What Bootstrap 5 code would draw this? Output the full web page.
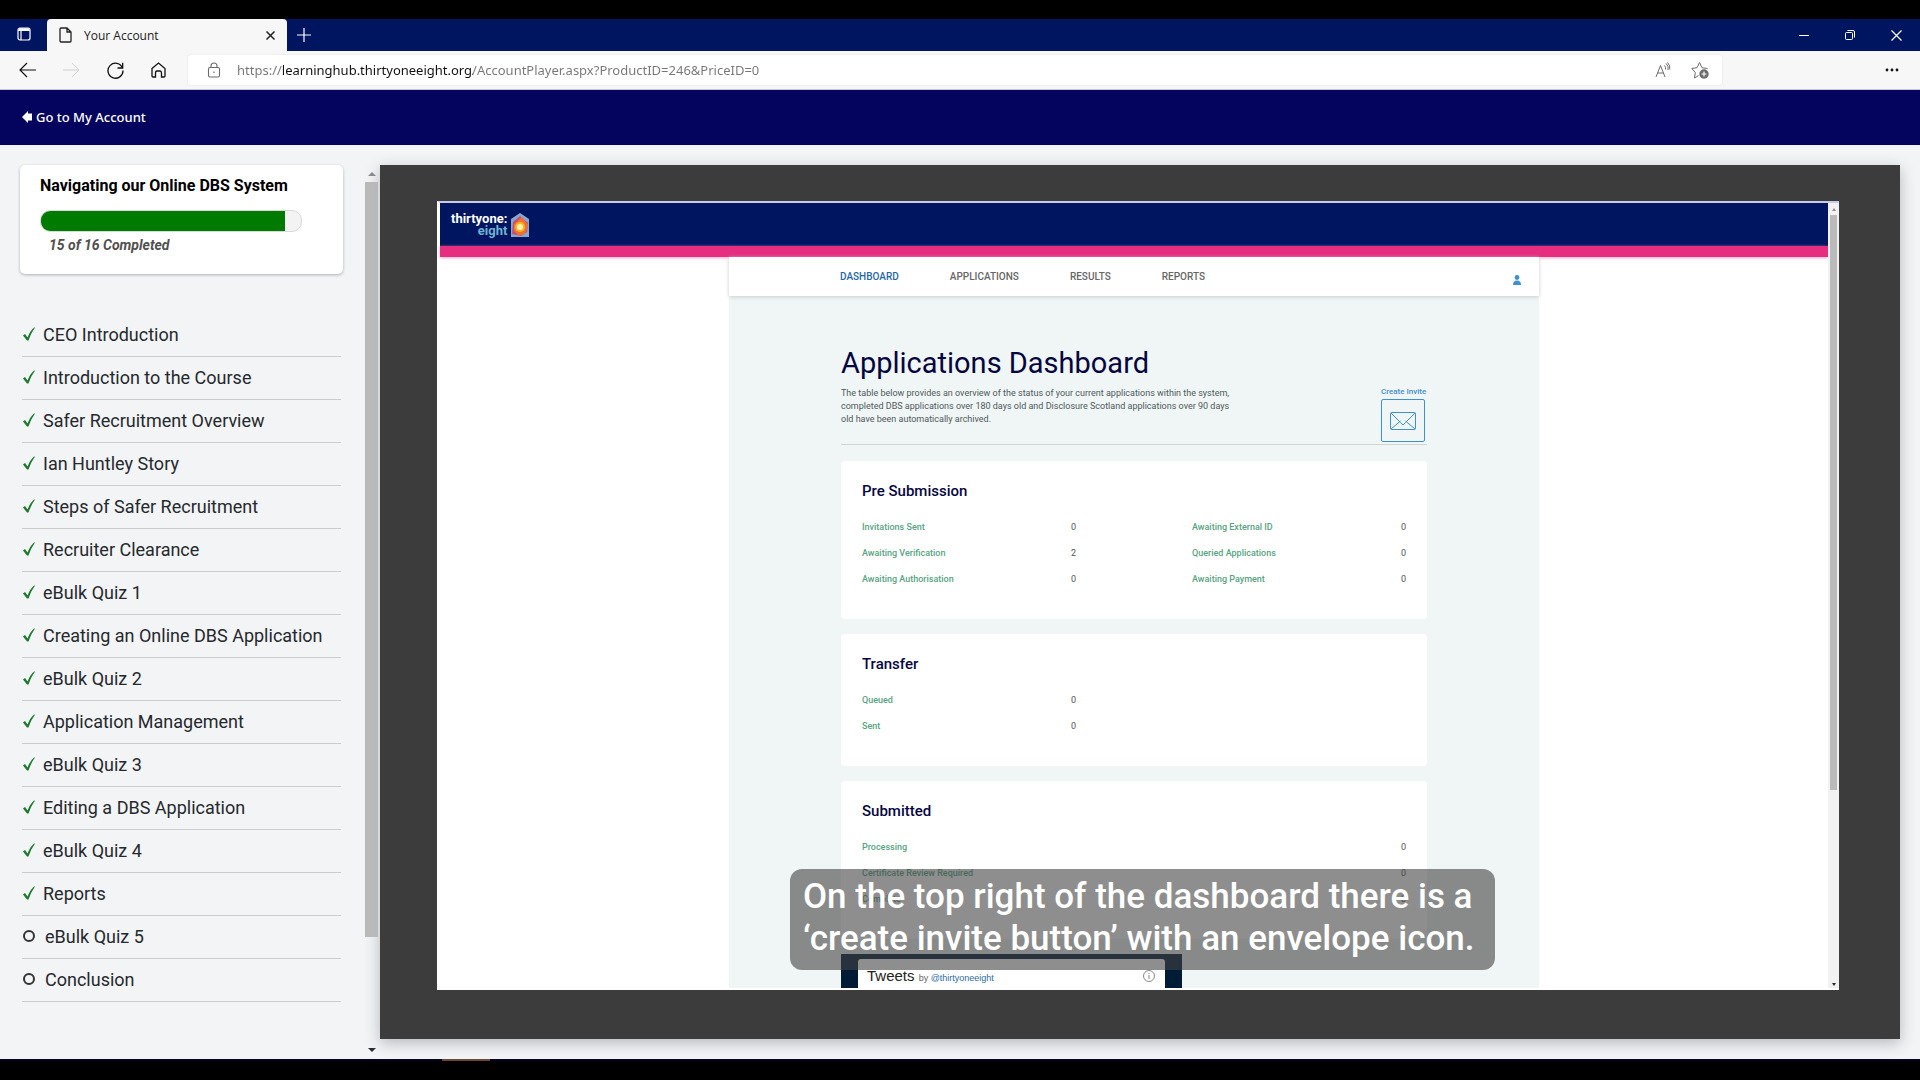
<!DOCTYPE html>
<html lang="en">
<head>
<meta charset="utf-8">
<meta name="viewport" content="width=device-width, initial-scale=1">
<title>Your Account</title>
<link href="https://cdn.jsdelivr.net/npm/bootstrap@5.3.0/dist/css/bootstrap.min.css" rel="stylesheet">
<style>
  body { font-family: Roboto, "Liberation Sans", sans-serif; background: #000; color: #26292d; }
  svg { display: block; flex: none; fill: none; stroke: currentColor; }
  .solid { fill: currentColor; stroke: none; }
  a, a:hover { color: inherit; text-decoration: none; }
  button { background: none; border: 0; padding: 0; color: inherit; }
  button:disabled { color: #d0d0d0; }
  .shell { min-height: 100vh; padding: 19px 0; }
  .ui-font { font-family: "Noto Sans", "Open Sans", sans-serif; }

  /* browser chrome */
  .tabstrip { background: #001560; color: #fff; height: 32px; }
  .tab-tools { width: 47px; padding-left: 17px; }
  .tab-current { background: #f7f7f7; color: #222; width: 240px; border-radius: 4px 4px 0 0; padding: 0 12px; font: 12px "Open Sans", sans-serif; }
  .tab-add { margin-left: 10px; }
  .win-controls { gap: 36px; padding-right: 18px; }
  .toolbar { background: #f7f7f7; height: 39px; border-bottom: 1px solid #c9cad6; color: #111; padding: 0 21px 0 19px; }
  .nav-tools { gap: 27px; width: 169px; }
  .address { background: #fff; height: 30px; border-radius: 3px; box-shadow: 0 0 2px #ddd; padding: 0 13px 0 19px; margin-right: 163px; color: #6b6b6b; }
  .address input { font-size: 13px; border: 0; outline: 0; height: 30px; padding: 0; margin-left: 16px; color: transparent;
    background: linear-gradient(90deg, #767676 46px, #111 46px, #111 236px, #767676 236px); -webkit-background-clip: text; background-clip: text; }

  /* course page */
  .topbar { background: #04045e; color: #fff; height: 55px; padding: 0 22px 2px; font: 500 13px "Noto Sans", sans-serif; }
  .course { background: #f2f4f6; padding-top: 20px; }
  .side { width: 345px; padding-left: 20px; }
  .summary { height: 109px; margin-right: 2px; padding: 10px 20px; border: 0; border-radius: 5px; box-shadow: 0 1px 3px #aab0b5; color: #000; }
  .summary h1 { font-size: 16px; line-height: 22px; font-weight: 700; margin: 0 0 13px; }
  .summary .progress { width: 262px; height: 22px; border-radius: 10px; background: #f3f3f3; border: 1px solid #d8dad8; }
  .summary .progress-bar { background: #007b00; }
  .summary p { font-size: 14px; line-height: 20px; font-weight: 700; font-style: italic; color: #505050; margin: 3px 0 0 9px; }
  .lessons { margin: 40px 4px 0 2px; }
  .lessons a { display: flex; align-items: center; height: 43px; font-size: 18px; border-bottom: 1px solid #cacccf; padding: 0 1px 2px; gap: 8px; }
  .lessons .todo { gap: 10px; }
  .lessons svg { width: 12px; height: 14px; color: #1b7a2b; }
  .lessons .todo svg { color: #333; }

  .scroll-rail { width: 15px; padding: 7px 2px 7px 0; margin-left: 20px; }
  .scroll-rail .thumb { width: 13px; height: 755px; background: #bababa; margin-top: 6px; }
  .stage { background: #3c3c3c; padding: 36px 61px 49px 57px; margin: 0 20px 20px 0; box-shadow: 0 4px 14px #b5b7ba; }
  .player { background: #fff; border: 2px solid #fff; border-left-width: 3px; border-right: 0; border-top-color: #c8cbea; }

  /* dashboard inside the player */
  .brandbar { background: #001560; height: 43px; padding: 0 11px; }
  .brand { font-size: 13px; line-height: 12px; font-weight: 700; text-align: right; color: #fff; }
  .brand span { display: block; color: #6fb3d3; }
  .pinkbar { background: #e62d80; height: 11px; box-shadow: 0 1px 3px #f5a9cb; }
  .panel { background: #f0f5f6; width: 810px; max-width: 100%; }
  .menu { background: #fff; height: 39px; padding: 0 16px 0 111px; font-size: 10px; font-weight: 500; color: #666; box-shadow: 0 1px 4px #c9cdcf; position: relative; }
  .menu .on { color: #2468a8; }
  .menu-links { gap: 51px; }
  .profile { color: #3f90cc; padding-top: 6px; }
  .inner { width: 586px; max-width: 100%; margin: 0 auto; padding-top: 49px; }
  .intro { border-bottom: 1px solid #cfd4d4; padding-bottom: 2px; margin-bottom: 16px; }
  .intro h2 { font-size: 29px; line-height: 36px; font-weight: 400; color: #06063f; margin: 0 0 6px; }
  .intro p { font-size: 9px; line-height: 13px; color: #4f5a5a; width: 394px; margin: 0 0 16px; }
  .invite { font-size: 8px; line-height: 12px; color: #3f90cc; margin-right: 2px; width: 44px; font-weight: 500; white-space: nowrap; }
  .invite-box { border: 1px solid #3f90cc; border-radius: 2px; height: 43px; margin-top: 1px; }
  .block { background: #fff; border-radius: 4px; padding: 20px 21px 26px; margin-bottom: 15px; }
  .block h3 { font-size: 15px; line-height: 20px; font-weight: 500; color: #06063f; margin: 0 0 14px; }
  .block table { width: 214px; font-size: 9px; }
  .block table.wide { width: 100%; }
  .block th { height: 26px; padding: 0; color: #58a383; font-weight: 500; }
  .block td { padding: 0; text-align: right; color: #555; }
  .tweets { background: #001b36; width: 341px; height: 34px; padding: 5px 17px 0; }
  .tweets-head { background: #fff; height: 29px; border-radius: 3px 3px 0 0; padding: 4px 10px 0 9px; font: 15px "Liberation Sans", sans-serif; color: #222; }
  .tweets-head small { font-size: 9px; color: #666; }
  .tweets-head a { color: #2b6ca3; }
  .tweets-head svg { color: #888; }
  .caption-box { position: absolute; left: 350px; bottom: 18px; width: 705px; padding: 7px 13px 10px; border-radius: 12px; background: rgba(66, 66, 66, .6); color: #fff; font-size: 35px; line-height: 42px; font-weight: 500; white-space: nowrap; }
  .rail-small { width: 11px; padding: 5px 2px 2px 2px; background: #f2f2f2; }
  .rail-small .thumb { width: 7px; height: 575px; background: #bababa; margin-top: 4px; }
  .taskbar { height: 2px; background: linear-gradient(90deg, #05051f 442px, #6b4938 442px, #6b4938 490px, #05051f 490px); }
</style>
</head>
<body>
<div class="shell d-flex flex-column">

  <header class="ui-font">
    <div class="tabstrip d-flex align-items-center">
      <div class="tab-tools"><button aria-label="Tab actions"><svg width="14" height="14" viewBox="0 0 14 14" stroke-width="1.2"><rect x="1" y="1" width="12" height="12" rx="2"/><path d="M1 3.5h12M4 4v9" /><path d="M2 2.2h10" stroke-width="2"/></svg></button></div>
      <div class="tab-current d-flex align-items-center h-100">
        <svg width="13" height="16" viewBox="0 0 13 16" stroke-width="1.3"><path d="M1 2q0-1 1-1h6l4 4v9q0 1-1 1H2q-1 0-1-1zM8 1v4h4"/></svg>
        <span class="ms-2 ps-1 flex-grow-1">Your Account</span>
        <button aria-label="Close tab"><svg width="9" height="9" viewBox="0 0 9 9" stroke-width="1.5"><path d="M.5.5l8 8M8.500.5l-8 8"/></svg></button>
      </div>
      <button class="tab-add" aria-label="New tab"><svg width="14" height="14" viewBox="0 0 14 14"><path d="M7 0v14M0 7h14" stroke-width="1.2"/></svg></button>
      <div class="win-controls d-flex align-items-center ms-auto">
        <button aria-label="Minimize"><svg width="10" height="10" viewBox="0 0 10 10"><path d="M0 5.500h10"/></svg></button>
        <button aria-label="Restore"><svg width="10" height="10" viewBox="0 0 10 10"><rect x=".5" y="2.500" width="7" height="7" rx="1"/><path d="M2.500.5H8q1.500 0 1.500 1.500v5.500"/></svg></button>
        <button aria-label="Close window"><svg width="11" height="11" viewBox="0 0 11 11" stroke-width="1.2"><path d="M.5.5l10 10M10.500.5l-10 10"/></svg></button>
      </div>
    </div>
    <div class="toolbar d-flex align-items-center">
      <div class="nav-tools d-flex align-items-center">
        <button aria-label="Back"><svg width="17" height="16" viewBox="0 0 17 16" stroke-width="1.2"><path d="M17 8H1M8 1L1 8l7 7"/></svg></button>
        <button aria-label="Forward" disabled><svg width="17" height="16" viewBox="0 0 17 16"><path d="M0 8h16M9 1l7 7-7 7"/></svg></button>
        <button aria-label="Refresh"><svg width="17" height="17" viewBox="0 0 17 17" stroke-width="1.3"><path d="M15.500 6A7.500 7.500 0 1 0 16 8.500M15.700.8V6h-5.200"/></svg></button>
        <button aria-label="Home"><svg width="15" height="16" viewBox="0 0 15 16" stroke-width="1.3"><path d="M1 6.500L7.500 1 14 6.500V14q0 1-1 1h-2.500v-4q0-2-1.500-2H6q-1.500 0-1.500 2v4H2q-1 0-1-1z"/></svg></button>
      </div>
      <div class="address d-flex align-items-center flex-grow-1">
        <svg width="14" height="16" viewBox="0 0 14 16" stroke-width="1.1"><rect x="1.500" y="5.500" width="11" height="9.500" rx="1.500"/><path d="M4 5.500V4a3 3 0 0 1 6 0v1.500"/><circle class="solid" cx="7" cy="10.200" r=".8"/></svg>
        <input class="flex-grow-1" type="text" aria-label="Address" value="https://learninghub.thirtyoneeight.org/AccountPlayer.aspx?ProductID=246&amp;PriceID=0">
        <button aria-label="Read aloud"><svg width="16" height="16" viewBox="0 0 16 16"><path d="M1 15L5.500 3.500 10 15M2.500 11h6M9.500 3.500q1.500 1.500 1 4M11 1.500q3 2.500 2 6.500M12.500.5q3 3 2.300 7"/></svg></button>
        <button class="ms-3 ps-1" aria-label="Add to favorites"><svg width="18" height="18" viewBox="0 0 18 18"><path d="M7.500 14.500L3.500 17 4.300 11.500.8 7.500l5.200-.8L8.500 1.500 11 6.700l5.500.8"/><circle class="solid" cx="13" cy="13" r="4.700"/><path d="M13 10.500v5M10.500 13h5" stroke="#fff" stroke-width="1.200"/></svg></button>
      </div>
      <button aria-label="Settings and more"><svg class="solid" width="14" height="4" viewBox="0 0 14 4"><circle cx="2" cy="2" r="1.400"/><circle cx="7" cy="2" r="1.400"/><circle cx="12" cy="2" r="1.400"/></svg></button>
    </div>
  </header>

  <nav class="topbar d-flex align-items-center">
    <a class="d-flex align-items-center gap-1" href="#"><svg class="solid" width="10" height="12" viewBox="0 0 10 12"><path d="M0 6L6 0v2.500h4v7H6V12z"/></svg>Go to My Account</a>
  </nav>

  <div class="course d-flex flex-grow-1">
    <aside class="side flex-shrink-0">
      <section class="card summary">
        <h1>Navigating our Online DBS System</h1>
        <div class="progress" role="progressbar" aria-label="Course progress" aria-valuenow="15" aria-valuemin="0" aria-valuemax="16"><div class="progress-bar" style="width:94%"></div></div>
        <p>15 of 16 Completed</p>
      </section>
      <nav class="lessons" id="lessons"></nav>
    </aside>

    <div class="scroll-rail d-flex flex-column align-items-center flex-shrink-0" aria-hidden="true">
      <svg class="solid" width="8" height="4" viewBox="0 0 8 4" opacity=".5"><path d="M0 4l4-4 4 4z"/></svg>
      <div class="thumb"></div>
      <svg class="solid mt-auto" width="8" height="4" viewBox="0 0 8 4"><path d="M0 0l4 4 4-4z"/></svg>
    </div>

    <main class="stage flex-grow-1">
      <div class="player d-flex position-relative">
        <div class="flex-grow-1">
          <div class="brandbar d-flex align-items-center gap-1">
            <div class="brand">thirtyone:<span>eight</span></div>
            <svg width="18" height="24" viewBox="0 0 18 24"><g stroke="none"><path d="M0 6L9 0l9 6v18H0z" fill="#86a9cf"/><path d="M2 9l7-6 8 7-1 9-6 4-9-2z" fill="#c94b78"/><path d="M3 11l8-7 6 8-3 9-6 2-5-5z" fill="#ee7330"/><circle cx="9" cy="14" r="5" fill="#f9b51b"/><circle cx="9" cy="14" r="3" fill="#fff3b8"/></g></svg>
          </div>
          <div class="pinkbar"></div>
          <div class="panel mx-auto">
            <nav class="menu d-flex align-items-center justify-content-between">
              <div class="menu-links d-flex">
                <a class="on" href="#">DASHBOARD</a><a href="#">APPLICATIONS</a><a href="#">RESULTS</a><a href="#">REPORTS</a>
              </div>
              <a class="profile" href="#" aria-label="Profile"><svg class="solid" width="12" height="10" viewBox="0 0 12 10"><circle cx="6" cy="2.500" r="2.400"/><path d="M2 10q0-4.500 4-4.500T10 10z"/></svg></a>
            </nav>
            <div class="inner">
              <div class="intro d-flex justify-content-between align-items-end">
                <div>
                  <h2>Applications Dashboard</h2>
                  <p>The table below provides an overview of the status of your current applications within the system, completed DBS applications over 180 days old and Disclosure Scotland applications over 90 days old have been automatically archived.</p>
                </div>
                <a class="invite" href="#">Create Invite
                  <div class="invite-box d-flex align-items-center justify-content-center"><svg width="26" height="18" viewBox="0 0 26 18"><rect x=".5" y=".5" width="25" height="17" rx="1"/><path d="M1 1l9.500 9.500L13 13l2.500-2.500L25 1M1 17l9.500-8M25 17l-9.500-8"/></svg></div>
                </a>
              </div>
              <section class="block">
                <h3>Pre Submission</h3>
                <div class="d-flex justify-content-between">
                  <table><tr><th scope="row">Invitations Sent</th><td>0</td></tr><tr><th scope="row">Awaiting Verification</th><td>2</td></tr><tr><th scope="row">Awaiting Authorisation</th><td>0</td></tr></table>
                  <table><tr><th scope="row">Awaiting External ID</th><td>0</td></tr><tr><th scope="row">Queried Applications</th><td>0</td></tr><tr><th scope="row">Awaiting Payment</th><td>0</td></tr></table>
                </div>
              </section>
              <section class="block">
                <h3>Transfer</h3>
                <table><tr><th scope="row">Queued</th><td>0</td></tr><tr><th scope="row">Sent</th><td>0</td></tr></table>
              </section>
              <section class="block">
                <h3>Submitted</h3>
                <table class="wide"><tr><th scope="row">Processing</th><td>0</td></tr><tr><th scope="row">Certificate Review Required</th><td>0</td></tr><tr><th scope="row">Complete</th><td>0</td></tr></table>
              </section>
              <div class="tweets"><div class="tweets-head d-flex justify-content-between align-items-center">
                <div>Tweets <small>by <a href="#">@thirtyoneeight</a></small></div>
                <svg width="12" height="12" viewBox="0 0 12 12"><circle cx="6" cy="6" r="5.500"/><path d="M6 5v4M6 3v1"/></svg>
              </div></div>
            </div>
          </div>
        </div>
        <div class="rail-small d-flex flex-column align-items-center" aria-hidden="true">
          <svg class="solid" width="4" height="3" viewBox="0 0 4 3" opacity=".5"><path d="M0 3l2-3 2 3z"/></svg>
          <div class="thumb"></div>
          <svg class="solid mt-auto" width="4" height="3" viewBox="0 0 4 3"><path d="M0 0l2 3 2-3z"/></svg>
        </div>
        <div class="caption-box">On the top right of the dashboard there is a<br>‘create invite button’ with an envelope icon.</div>
      </div>
    </main>
  </div>
  <div class="taskbar"></div>
</div>

<script>
  const done = ["CEO Introduction", "Introduction to the Course", "Safer Recruitment Overview", "Ian Huntley Story", "Steps of Safer Recruitment", "Recruiter Clearance", "eBulk Quiz 1", "Creating an Online DBS Application", "eBulk Quiz 2", "Application Management", "eBulk Quiz 3", "Editing a DBS Application", "eBulk Quiz 4", "Reports"];
  const todo = ["eBulk Quiz 5", "Conclusion"];
  const tick = '<svg class="solid" viewBox="0 0 12 14"><path d="M0 8.500L2 7l2.500 3.500Q7 4 11 .5h1Q8 6 5.500 13.500H4z"/></svg>';
  const ring = '<svg viewBox="0 0 12 14" stroke-width="2"><circle cx="6" cy="7" r="5"/></svg>';
  document.getElementById("lessons").innerHTML =
    done.map(t => `<a href="#">${tick}${t}</a>`).join("") +
    todo.map(t => `<a class="todo" href="#">${ring}${t}</a>`).join("");
</script>
<script src="https://cdn.jsdelivr.net/npm/bootstrap@5.3.0/dist/js/bootstrap.bundle.min.js"></script>
</body>
</html>
